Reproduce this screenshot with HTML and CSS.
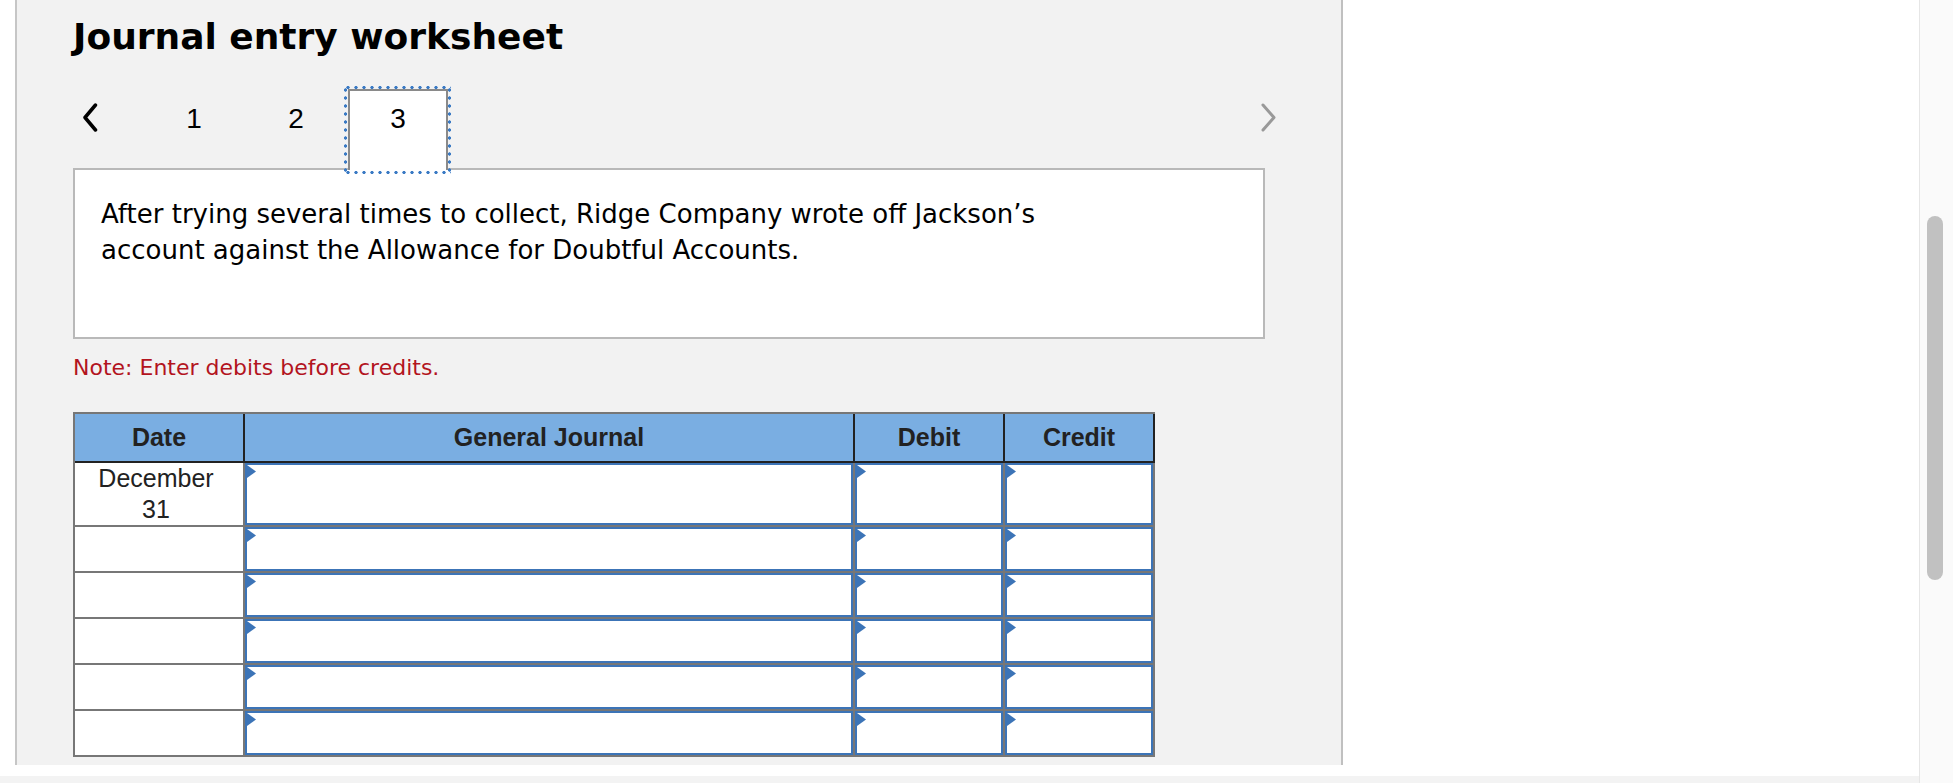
FILE: index.html
```html
<!DOCTYPE html>
<html lang="en">
<head>
  <meta charset="UTF-8">
  <title>Journal entry worksheet</title>
  <link rel="stylesheet" href="styles.css">
</head>
<body>
  <div class="page">
    <div class="worksheet">
      <h1>Journal entry worksheet</h1>

      <div class="steps">
        <div class="step-arrow prev" role="button" aria-label="Previous">
          <svg width="16" height="29" viewBox="0 0 16 29"><polyline points="13.5,2 3,14.5 13.5,27"/></svg>
        </div>
        <div class="tabs" role="tablist">
          <div class="tab" role="tab">1</div>
          <div class="tab" role="tab">2</div>
          <div class="tab active" role="tab">3</div>
        </div>
        <div class="step-arrow next" role="button" aria-label="Next">
          <svg width="17" height="29" viewBox="0 0 17 29"><polyline points="3,2 14,14.5 3,27"/></svg>
        </div>
      </div>

      <div class="question">
        <p>After trying several times to collect, Ridge Company wrote off Jackson’s account against the Allowance for Doubtful Accounts.</p>
      </div>

      <p class="note">Note: Enter debits before credits.</p>

      <div class="journal">
        <div class="journal-head">
          <div>Date</div>
          <div>General Journal</div>
          <div>Debit</div>
          <div>Credit</div>
        </div>
        <div class="journal-row first">
          <div class="date-cell">December<br>31</div>
          <div class="entry"><span class="flag"></span></div>
          <div class="entry"><span class="flag"></span></div>
          <div class="entry"><span class="flag"></span></div>
        </div>
        <div class="journal-row">
          <div class="date-cell"></div>
          <div class="entry"><span class="flag"></span></div>
          <div class="entry"><span class="flag"></span></div>
          <div class="entry"><span class="flag"></span></div>
        </div>
        <div class="journal-row">
          <div class="date-cell"></div>
          <div class="entry"><span class="flag"></span></div>
          <div class="entry"><span class="flag"></span></div>
          <div class="entry"><span class="flag"></span></div>
        </div>
        <div class="journal-row">
          <div class="date-cell"></div>
          <div class="entry"><span class="flag"></span></div>
          <div class="entry"><span class="flag"></span></div>
          <div class="entry"><span class="flag"></span></div>
        </div>
        <div class="journal-row">
          <div class="date-cell"></div>
          <div class="entry"><span class="flag"></span></div>
          <div class="entry"><span class="flag"></span></div>
          <div class="entry"><span class="flag"></span></div>
        </div>
        <div class="journal-row">
          <div class="date-cell"></div>
          <div class="entry"><span class="flag"></span></div>
          <div class="entry"><span class="flag"></span></div>
          <div class="entry"><span class="flag"></span></div>
        </div>
      </div>
    </div>
    <div class="footer-bar"></div>
  </div>

  <div class="scrollbar"><div class="thumb"></div></div>
</body>
</html>
```

FILE: styles.css
```css
html,
body {
  margin: 0;
  height: 783px;
  overflow: hidden;
}

body {
  display: flex;
  background: #fff;
  font-family: "DejaVu Sans", Verdana, sans-serif;
  color: #000;
}

.page {
  flex: 1;
}

.worksheet {
  box-sizing: border-box;
  width: 1328px;
  height: 765px;
  margin-left: 15px;
  padding: 16px 64px 0 56px;
  background: #f2f2f2;
  border-left: 2px solid #c6c6c6;
  border-right: 2px solid #c0c0c0;
}

h1 {
  margin: 0;
  font-size: 36px;
  line-height: 42px;
  font-weight: bold;
}

/* step navigation */
.steps {
  position: relative;
  z-index: 1;
  display: flex;
  align-items: flex-start;
  height: 81px;
  margin-top: 31px;
  margin-bottom: -2px;
}

.step-arrow {
  cursor: pointer;
}

.step-arrow svg {
  display: block;
}

.step-arrow polyline {
  fill: none;
  stroke-width: 3.5;
  stroke-linecap: round;
  stroke-linejoin: round;
}

.prev {
  box-sizing: border-box;
  width: 71px;
  padding: 14px 0 0 9px;
}

.prev polyline {
  stroke: #000;
}

.next {
  margin-left: auto;
  padding-top: 14px;
}

.next polyline {
  stroke: #999;
  stroke-width: 3;
}

.tabs {
  display: flex;
  gap: 2px;
}

.tab {
  position: relative;
  box-sizing: border-box;
  width: 100px;
  height: 81px;
  padding-top: 12px;
  border: 2px solid transparent;
  border-bottom: 0;
  font: 28px/32px "Liberation Sans", Arial, sans-serif;
  color: #000;
  text-align: center;
  cursor: pointer;
}

.tab.active {
  background: #fff;
  border-color: #8a8a8a;
}

/* dotted focus ring */
.tab.active::after {
  content: "";
  position: absolute;
  top: -5px;
  left: -6px;
  right: -5px;
  bottom: -4px;
  pointer-events: none;
  background:
    radial-gradient(circle, #3a7ac4 1.4px, transparent 1.9px) 0 0 / 8px 3px repeat-x,
    radial-gradient(circle, #3a7ac4 1.4px, transparent 1.9px) 0 100% / 8px 3px repeat-x,
    radial-gradient(circle, #3a7ac4 1.4px, transparent 1.9px) 0 0 / 3px 8px repeat-y,
    radial-gradient(circle, #3a7ac4 1.4px, transparent 1.9px) 100% 0 / 3px 8px repeat-y;
}

/* question text */
.question {
  box-sizing: border-box;
  width: 1192px;
  height: 171px;
  padding: 26px 26px 0;
  background: #fff;
  border: 2px solid #b9b9b9;
}

.question p {
  margin: 0;
  max-width: 960px;
  font-size: 26px;
  line-height: 36px;
}

.note {
  margin: 14px 0 0;
  font-size: 22px;
  line-height: 30px;
  color: #b3141e;
}

/* journal table */
.journal {
  box-sizing: border-box;
  width: 1082px;
  margin-top: 29px;
  padding: 2px;
  background: #777;
  font-family: "Liberation Sans", Arial, sans-serif;
  color: #222;
}

.journal-head,
.journal-row {
  display: grid;
  grid-template-columns: 168px 608px 148px 148px;
  column-gap: 2px;
}

.journal-head {
  margin-right: -2px;
  padding: 0 2px 2px 0;
  background: #222;
}

.journal-head div {
  display: flex;
  align-items: center;
  justify-content: center;
  height: 47px;
  background: #7aaee2;
  font-size: 25px;
  font-weight: bold;
}

.journal-row {
  height: 44px;
  margin-top: 2px;
}

.journal-row.first {
  height: 62px;
  margin-top: 0;
}

.date-cell {
  padding-right: 6px;
  background: #fff;
  text-align: center;
  font-size: 25px;
  line-height: 31px;
}

.entry {
  position: relative;
  background: #fff;
  border: 2px solid #3c74b7;
}

.flag {
  position: absolute;
  top: 0;
  left: 0;
  width: 9px;
  height: 13px;
  background: #3c74b7;
  clip-path: polygon(0 0, 100% 50%, 0 100%);
}

.footer-bar {
  height: 20px;
  margin-top: 11px;
  background: #f3f3f3;
}

.scrollbar {
  box-sizing: border-box;
  width: 34px;
  border-left: 1px solid #e6e6e6;
  background: #fafafa;
}

.thumb {
  width: 16px;
  height: 364px;
  margin: 216px 0 0 7px;
  border-radius: 8px;
  background: #c1c1c1;
}
```
